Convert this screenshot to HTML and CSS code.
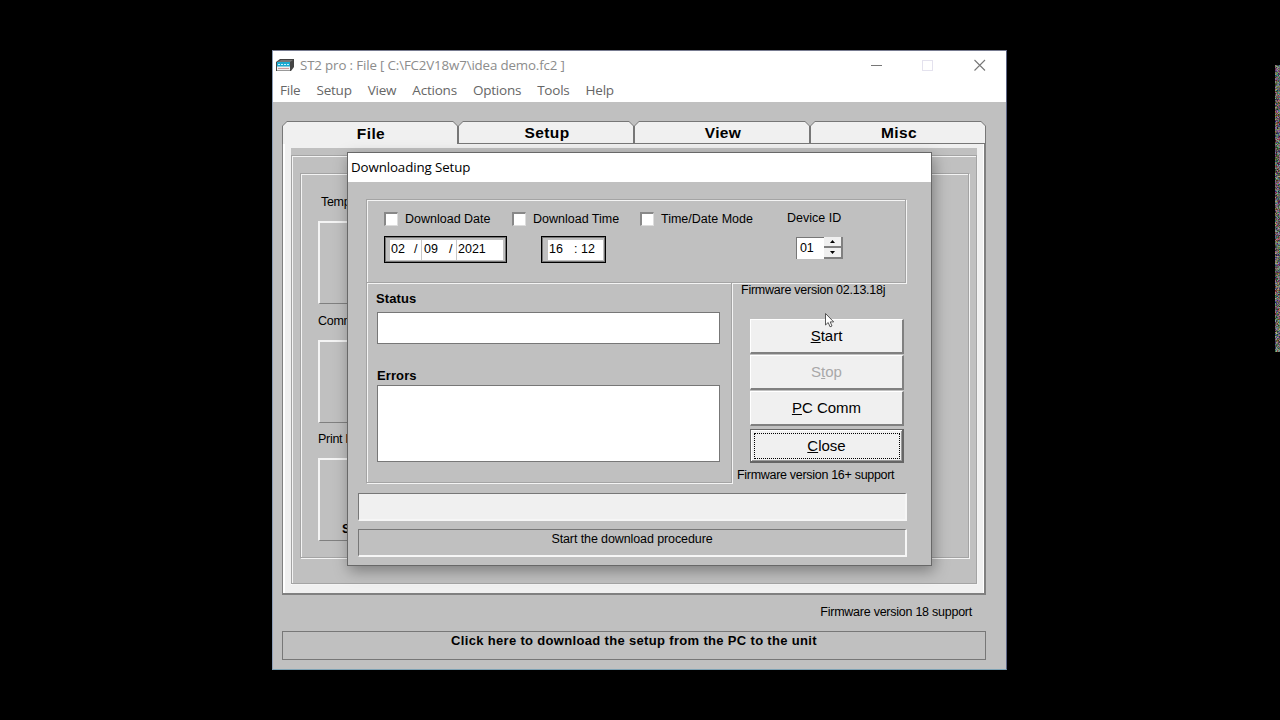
FILE: index.html
```html
<!DOCTYPE html>
<html lang="en">
<head>
  <meta charset="UTF-8" />
  <meta name="viewport" content="width=device-width, initial-scale=1.0"/>
  <title>ST2 pro</title>
  <link rel="stylesheet" href="styles.css">
</head>
<body>
  <div class="window">
    <div class="titlebar">
      <svg class="app-icon" width="19" height="14" viewBox="0 0 19 14">
        <path d="M0 4L4 1H18V9L15 13H0Z" fill="#444"/>
        <path d="M1 4L5 2H17L14 4Z" fill="#777"/>
        <rect x="1" y="4" width="13" height="5" fill="#19a9d0"/>
        <path d="M2 6.500H13" stroke="#c8f4ff" stroke-dasharray="2 1"/>
        <rect x="1" y="8.500" width="13" height="4" fill="#eee"/>
        <path d="M2 10.500H13" stroke="#c99"/>
      </svg>
      <span class="title">ST2 pro : File [ C:\FC2V18w7\idea demo.fc2 ]</span>
      <svg class="controls" width="118" height="14" viewBox="0 0 118 14">
        <path d="M1 7.5H12" stroke="#777"/>
        <rect x="52.5" y="2.5" width="10" height="10" fill="none" stroke="#e4e2ee"/>
        <path d="M104.500 2L115 12.500M115 2L104.500 12.500" stroke="#777" stroke-width="1.100"/>
      </svg>
    </div>
    <div class="menubar">
      <span>File</span><span>Setup</span><span>View</span><span>Actions</span><span>Options</span><span>Tools</span><span>Help</span>
    </div>

    <div class="tabs">
      <div class="tab active"><span>File</span></div>
      <div class="tab"><span>Setup</span></div>
      <div class="tab"><span>View</span></div>
      <div class="tab"><span>Misc</span></div>
    </div>
    <div class="page">
      <div class="page-inner">
        <div class="etched outer">
          <div class="etched tools">
            <p class="label first">Temp</p>
            <div class="tool"></div>
            <p class="label">Comm</p>
            <div class="tool"></div>
            <p class="label">Print I</p>
            <div class="tool"><b>S</b></div>
          </div>
        </div>
      </div>
    </div>
    <div class="support">Firmware version 18 support</div>
    <div class="hint">Click here to download the setup from the PC to the unit</div>
  </div>

  <div class="dialog">
    <div class="dialog-title">Downloading Setup</div>
    <div class="etched options">
      <div class="option date">
        <label><i class="check"></i><span>Download Date</span></label>
        <div class="entry"><span class="d">02</span><span class="m">/</span><span class="d2">09</span><span class="m2">/</span><span class="y">2021</span></div>
      </div>
      <div class="option time">
        <label><i class="check"></i><span>Download Time</span></label>
        <div class="entry"><span class="h">16</span><span class="c">:</span><span>12</span></div>
      </div>
      <div class="option mode">
        <label><i class="check"></i><span>Time/Date Mode</span></label>
      </div>
      <div class="device">
        <span class="device-label">Device ID</span>
        <div class="spinner">
          <span class="value">01</span>
          <div class="arrows">
            <i><svg width="5" height="3"><path d="M0 3L2.500 0L5 3Z"/></svg></i>
            <i><svg width="5" height="3"><path d="M0 0L2.500 3L5 0Z"/></svg></i>
          </div>
        </div>
      </div>
    </div>
    <div class="middle">
      <div class="etched report">
        <h4>Status</h4>
        <div class="box status"></div>
        <h4 class="errors-title">Errors</h4>
        <div class="box errors"></div>
      </div>
      <div class="actions">
        <p class="version">Firmware version 02.13.18j</p>
        <div class="btn"><span><u>S</u>tart</span></div>
        <div class="btn disabled"><span>S<u>t</u>op</span></div>
        <div class="btn"><span><u>P</u>C Comm</span></div>
        <div class="btn focused"><span><u>C</u>lose</span></div>
        <p class="version16">Firmware version 16+ support</p>
      </div>
    </div>
    <div class="sunken progress"></div>
    <div class="sunken message">Start the download procedure</div>
  </div>

  <svg class="cursor" width="10" height="15" viewBox="0 0 10 15">
    <path d="M.5 .5V12L3.200 9.500L5 13.800L7 13L5.200 8.900H8.700Z" fill="#fff" stroke="#444" stroke-width=".9"/>
  </svg>
  <canvas class="noise" id="noise" width="5" height="287"></canvas>

  <script>
    const ctx = document.getElementById("noise").getContext("2d");
    let seed = 7;
    function rnd(n) {
      seed = (seed * 16807) % 2147483647;
      return seed % n;
    }
    for (let y = 0; y < 287; y++) {
      for (let x = 0; x < 5; x++) {
        const base = 15 + rnd(70);
        ctx.fillStyle = `rgb(${base + rnd(110)}, ${base + rnd(100)}, ${base + rnd(100)})`;
        ctx.fillRect(x, y, 1, 1);
      }
    }
  </script>
</body>
</html>
```
FILE: styles.css
```css
* {
  box-sizing: border-box;
}
body {
  margin: 0;
  width: 1280px;
  height: 720px;
  position: relative;
  overflow: hidden;
  background: #000;
  color: #000;
  font-family: "Liberation Sans", Arial, sans-serif;
  font-size: 12.5px;
  line-height: 16px;
  white-space: nowrap;
}
p, h4 {
  margin: 0;
}

/* main window */
.window {
  position: absolute;
  left: 272px;
  top: 50px;
  width: 735px;
  height: 620px;
  background: #c0c0c0;
  border: 1px solid #8e9fb8;
  border-top-color: #777b90;
  border-right-color: #5c6484;
  border-bottom-color: #7fa3b5;
}
.titlebar {
  display: flex;
  align-items: center;
  height: 27px;
  padding-left: 3px;
  background: #fff;
  font-family: "Open Sans", "Noto Sans", sans-serif;
  font-size: 13.3px;
  letter-spacing: -0.14px;
  color: #8c8c8c;
}
.title {
  margin-left: 5px;
}
.controls {
  margin-left: auto;
  margin-right: 18px;
}
.menubar {
  display: flex;
  align-items: center;
  gap: 16px;
  height: 24px;
  padding-left: 7px;
  background: #fff;
  font-family: "Open Sans", "Noto Sans", sans-serif;
  font-size: 13.5px;
  letter-spacing: -0.22px;
  color: #666;
}
.tabs {
  display: flex;
  height: 23px;
  margin: 19px 20px 0 9px;
}
.tab {
  flex: 1;
  padding: 1px 1px 1px 1px;
  background: #777;
  clip-path: polygon(0 5px, 5px 0, calc(100% - 5px) 0, 100% 5px, 100% 100%, 0 100%);
}
.tab span {
  display: block;
  height: 21px;
  line-height: 22px;
  padding-left: 2px;
  text-align: center;
  background: #f0f0f0;
  clip-path: polygon(0 4px, 4px 0, calc(100% - 4px) 0, 100% 4px, 100% 100%, 0 100%);
  font-size: 15.5px;
  font-weight: bold;
  letter-spacing: 0.4px;
}
.tab.active {
  padding-bottom: 0;
}
.tab.active span {
  height: 22px;
  line-height: 23px;
}
.page {
  height: 451px;
  margin: 0 20px 0 9px;
  padding: 4px 7px 8px 8px;
  background: #f0f0f0;
  border: 1px solid #808080;
  border-width: 0 2px 2px 1px;
  box-shadow: inset 2px 0 #fff, inset -1px 0 #fff;
}
.page-inner {
  height: 437px;
  padding-top: 7px;
  background: #c0c0c0;
  border-bottom: 1px solid #fff;
}
.etched {
  border: 1px solid #a4a4a4;
  box-shadow: inset 1px 1px #f4f4f4, 1px 1px #f4f4f4;
}
.outer {
  height: 429px;
  padding: 17px 7px 0 8px;
}
.tools {
  height: 385px;
  padding: 20px 0 0 17px;
}
.label.first {
  padding-left: 3px;
}
.label {
  height: 27px;
  letter-spacing: -0.3px;
}
.tool {
  width: 120px;
  height: 83px;
  margin-bottom: 8.5px;
  padding: 61px 0 0 22px;
  border: 1px solid #808080;
  border-left: 2px solid #f4f4f4;
  border-top: 2px solid #f4f4f4;
}
.support {
  margin: 9px 34px 0 0;
  text-align: right;
  letter-spacing: -0.25px;
}
.hint {
  height: 29px;
  margin: 11px 20px 0 9px;
  border: 1px solid #777;
  text-align: center;
  font-weight: bold;
  font-size: 13px;
  letter-spacing: 0.33px;
  line-height: 17px;
}

/* dialog */
.dialog {
  position: absolute;
  left: 347px;
  top: 152px;
  width: 585px;
  height: 414px;
  background: #c0c0c0;
  border: 1px solid #686868;
  box-shadow: 2px 5px 14px rgba(0,0,0,0.35);
}
.dialog-title {
  height: 29px;
  padding: 6px 0 0 3px;
  background: #fff;
  font-family: "Open Sans", "Noto Sans", sans-serif;
  font-size: 13.3px;
  letter-spacing: -0.1px;
}
.options {
  display: flex;
  width: 540px;
  height: 84px;
  margin: 17px 0 0 18px;
  padding: 10px 0 0 17px;
}
.option {
  width: 128px;
}
.option label {
  display: flex;
  align-items: center;
  gap: 7px;
  height: 17px;
}
.check {
  width: 14px;
  height: 14px;
  margin-top: 1px;
  background: #fff;
  border: 1px solid #ddd;
  border-top: 2px solid #888;
  border-left: 2px solid #888;
}
.entry {
  display: flex;
  width: 123px;
  height: 27px;
  margin-top: 9px;
  background:
    linear-gradient(#c8c8c8, #c8c8c8) 36px 3px / 1px 20px no-repeat,
    linear-gradient(#c8c8c8, #c8c8c8) 71px 3px / 1px 20px no-repeat,
    linear-gradient(#fff, #fff) 5px 3px / 113px 20px no-repeat #c0c0c0;
  border: 1px solid #000;
  box-shadow: inset 0 0 0 1px #777;
  padding: 4px 0 0 6px;
}
.entry .d { width: 23px; }
.entry .m { width: 10px; }
.entry .d2 { width: 25px; }
.entry .m2 { width: 9px; }
.time .entry {
  width: 65px;
  margin-left: 29px;
  padding-left: 7px;
  background: linear-gradient(#fff, #fff) 6px 3px / 55px 20px no-repeat #c0c0c0;
}
.entry .h { width: 25px; }
.entry .c { width: 7px; }
.device {
  margin-left: 19px;
}
.device-label {
  display: block;
  height: 27px;
}
.spinner {
  display: flex;
  width: 47px;
  height: 22px;
  margin-left: 9px;
}
.value {
  width: 28px;
  padding: 2px 0 0 3px;
  letter-spacing: -0.3px;
  background: #fff;
  border-left: 1px solid #777;
  border-top: 1px solid #777;
}
.arrows {
  flex: 1;
}
.arrows i {
  display: flex;
  align-items: center;
  justify-content: center;
  height: 11px;
  background: #f0f0f0;
  border-right: 2px solid #808080;
  border-bottom: 2px solid #808080;
}
.middle {
  display: flex;
  height: 201px;
  margin-top: -1px;
}
.report {
  width: 366px;
  height: 201px;
  margin-left: 18px;
  padding: 8px 0 0 10px;
}
h4 {
  height: 21px;
  margin-left: -1px;
  font-size: 13px;
  letter-spacing: 0.1px;
}
.box {
  width: 343px;
  background: #fff;
  border: 1px solid #777;
}
.status {
  height: 32px;
}
.errors-title {
  margin: 24px 0 0 0;
  height: 17px;
}
.errors {
  height: 77px;
}
.version {
  margin: 0 0 21px 9px;
  letter-spacing: -0.25px;
}
.btn {
  display: flex;
  align-items: center;
  justify-content: center;
  width: 154px;
  height: 35px;
  margin: 0 0 1px 18px;
  padding-bottom: 1px;
  background: #f0f0f0;
  border: 1px solid #fff;
  border-right: 2px solid #808080;
  border-bottom: 2px solid #808080;
  font-size: 15px;
}
.btn.disabled {
  color: #a8a8a8;
}
.btn.focused {
  margin-top: 3px;
  height: 34px;
  padding-bottom: 0;
  border: 2px solid #666;
  border-width: 1px 2px 2px 1px;
  box-shadow: inset 1px 1px #fff, inset -1px -1px #999;
}
.btn.focused span {
  width: 146px;
  height: 26px;
  line-height: 24px;
  text-align: center;
  border: 1px dotted #000;
}
.version16 {
  margin: 4px 0 0 5px;
  letter-spacing: -0.3px;
}
.sunken {
  width: 549px;
  height: 28px;
  margin-left: 10px;
  border: 2px solid #f6f6f6;
  border-top: 1px solid #777;
  border-left: 1px solid #777;
}
.progress {
  margin-top: 10px;
  background: #f0f0f0;
}
.message {
  margin-top: 8px;
  padding-top: 1px;
  text-align: center;
  letter-spacing: -0.1px;
}

.cursor {
  position: absolute;
  left: 825px;
  top: 313px;
}
.noise {
  position: absolute;
  left: 1275px;
  top: 65px;
}
```
